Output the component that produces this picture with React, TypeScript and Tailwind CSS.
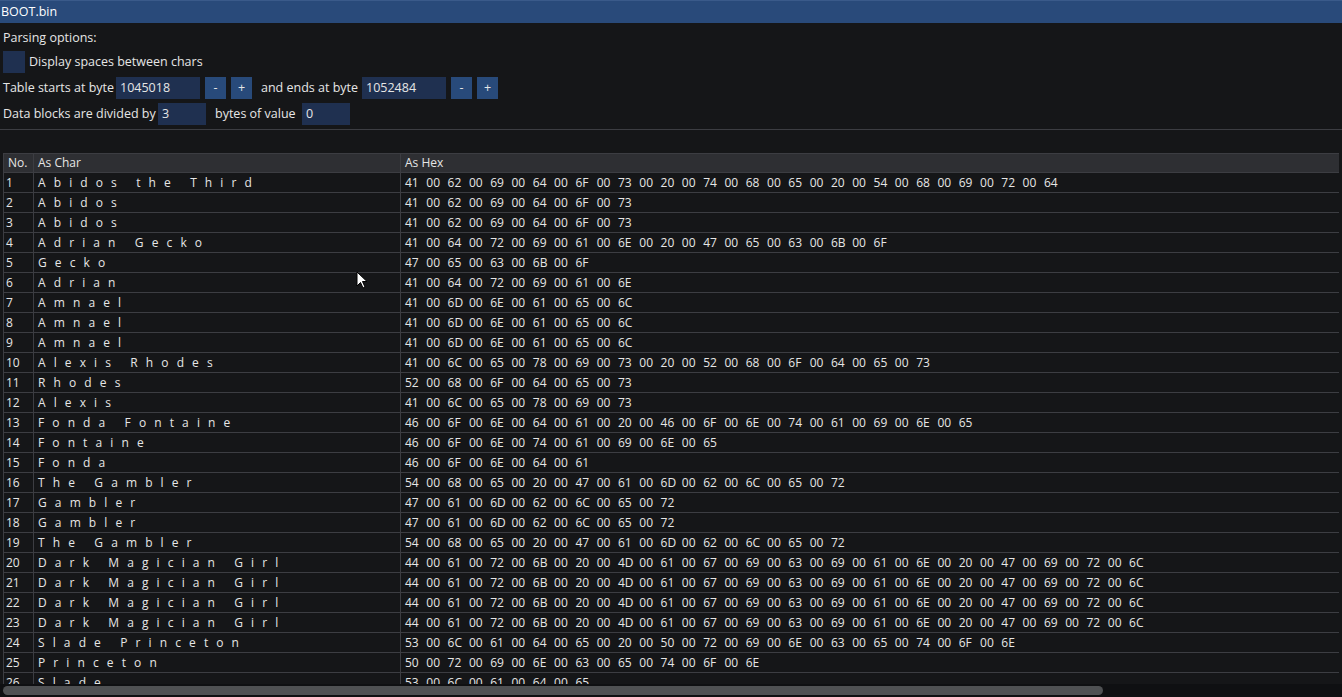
import React from "react";

const names = ["Abidos the Third","Abidos","Abidos","Adrian Gecko","Gecko","Adrian","Amnael","Amnael","Amnael","Alexis Rhodes","Rhodes","Alexis","Fonda Fontaine","Fontaine","Fonda","The Gambler","Gambler","Gambler","The Gambler","Dark Magician Girl","Dark Magician Girl","Dark Magician Girl","Dark Magician Girl","Slade Princeton","Princeton","Slade"];

const bytes = (s: string) => {
  const out: string[] = [];
  s.split("").forEach((c, i) => {
    if (i > 0) out.push("00");
    out.push(c.charCodeAt(0).toString(16).toUpperCase().padStart(2, "0"));
  });
  return out;
};
const spaced = (s: string) => s.split("").join(" ");

function Input({ v, w }: { v: string; w: string }) {
  return <div className={`h-[22px] bg-[#1f3050] px-1 flex items-center ${w}`}>{v}</div>;
}
function Btn({ t }: { t: string }) {
  return <div className="h-[22px] w-[21px] bg-[#284a7a] flex items-center justify-center">{t}</div>;
}

export default function App() {
  return (
    <div className="w-[1342px] h-[697px] bg-[#151618] text-[#e6e6e6] text-[12px] overflow-hidden relative" style={{ fontFamily: '"Open Sans", sans-serif' }}>
      <div className="h-[23px] bg-[#294a7a] border-t border-[#3a5a8a] flex items-center px-[1px] text-white text-[12.5px]">BOOT.bin</div>
      <div className="px-[3px] pt-[6px] flex flex-col gap-[4px] text-[12.5px]">
        <div className="h-[18px] flex items-center">Parsing options:</div>
        <div className="flex items-center gap-[4px]"><div className="w-[22px] h-[22px] bg-[#1f3050]" />Display spaces between chars</div>
        <div className="flex items-center">
          <span className="w-[113px]">Table starts at byte</span><Input v="1045018" w="w-[84px]" /><div className="flex gap-[5px] ml-[5px]"><Btn t="-" /><Btn t="+" /></div>
          <span className="ml-[9px] w-[101px]">and ends at byte</span><Input v="1052484" w="w-[84px]" /><div className="flex gap-[5px] ml-[5px]"><Btn t="-" /><Btn t="+" /></div>
        </div>
        <div className="flex items-center">
          <span className="w-[155px]">Data blocks are divided by</span><Input v="3" w="w-[48px]" /><span className="ml-[9px] w-[87px]">bytes of value</span><Input v="0" w="w-[48px]" />
        </div>
      </div>
      <div className="mt-[4px] border-t border-[#3c3d42]" />
      <div className="mt-[23px] ml-[3px] mr-[3px] h-[531px] overflow-hidden border-t border-l border-[#3c3d42]">
        <div className="flex h-[19px] bg-[#2e2f33] border-b border-[#3c3d42]">
          <div className="w-[30px] px-[4px] border-r border-[#3c3d42] flex items-center">No.</div>
          <div className="w-[367px] px-[4px] border-r border-[#3c3d42] flex items-center">As Char</div>
          <div className="flex-1 px-[4px] flex items-center">As Hex</div>
        </div>
        {names.map((n, i) => (
          <div key={i} className="flex h-[20px] border-b border-[#3c3d42]">
            <div className="w-[30px] px-[2px] border-r border-[#3c3d42] flex items-center">{i + 1}</div>
            <div className="w-[367px] px-[4px] border-r border-[#3c3d42] flex items-center whitespace-pre tracking-[2.5px]">{spaced(n)}</div>
            <div className="flex-1 px-[4px] flex items-center whitespace-pre">
              {bytes(n).map((b, j) => <span key={j} className="inline-block w-[21.3px] shrink-0">{b}</span>)}
            </div>
          </div>
        ))}
      </div>
      <div className="absolute left-0 right-0 top-[684px] h-[13px] bg-[#0f1012] flex items-center px-[3px]">
        <div className="w-[1100px] h-[9px] rounded-full bg-[#4f5153]" />
      </div>
      <svg className="absolute left-[356px] top-[271px]" width="12" height="18" viewBox="0 0 12 18">
        <path d="M1 1 L1 15 L4.5 11.5 L7 17 L9 16 L6.5 10.5 L11 10.5 Z" fill="#fff" stroke="#000" strokeWidth="1" />
      </svg>
    </div>
  );
}
